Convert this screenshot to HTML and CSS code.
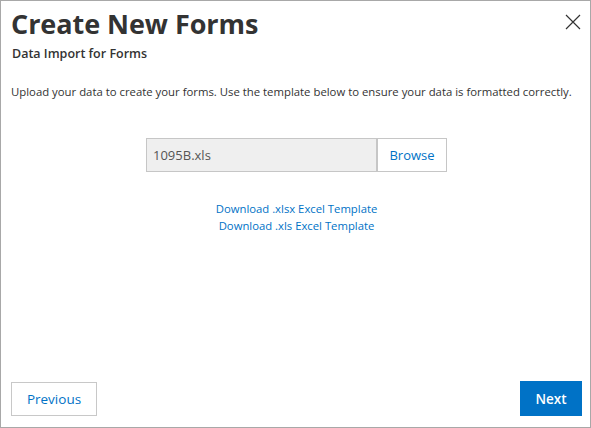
FILE: index.html
```html
<!DOCTYPE html>
<html lang="en">
<head>
<meta charset="utf-8">
<title>Create New Forms</title>
<link rel="stylesheet" href="styles.css">
</head>
<body>
<div class="dialog">
  <header class="dialog-header">
    <div class="titles">
      <h1 class="title">Create New Forms</h1>
      <h2 class="subtitle">Data Import for Forms</h2>
    </div>
    <button class="close" type="button" aria-label="Close">
      <svg width="16" height="16" viewBox="0 0 16 16"><path d="M1 1 L15 15 M15 1 L1 15" stroke="#333" stroke-width="1.2" fill="none"/></svg>
    </button>
  </header>

  <p class="intro">Upload your data to create your forms. Use the template below to ensure your data is formatted correctly.</p>

  <div class="upload">
    <div class="file-name">1095B.xls</div>
    <button class="browse" type="button">Browse</button>
  </div>

  <div class="templates">
    <a href="#">Download .xlsx Excel Template</a>
    <a href="#">Download .xls Excel Template</a>
  </div>

  <footer class="dialog-footer">
    <button class="btn btn-secondary" type="button">Previous</button>
    <button class="btn btn-primary" type="button">Next</button>
  </footer>
</div>
</body>
</html>
```
FILE: styles.css
```css
html, body {
  margin: 0;
  padding: 0;
  background: #fff;
}

body {
  font-family: "Open Sans", "Noto Sans", sans-serif;
  color: #333;
}

.dialog {
  box-sizing: border-box;
  width: 591px;
  height: 428px;
  border: 1px solid #a8a8a8;
  display: flex;
  flex-direction: column;
  padding: 0 8px 11px 10px;
}

.dialog-header {
  display: flex;
  justify-content: space-between;
  align-items: flex-start;
}

.title {
  margin: 4px 0 0 0;
  font-size: 27px;
  font-weight: 700;
  line-height: 38px;
  letter-spacing: -0.05px;
  color: #333;
}

.subtitle {
  margin: 2px 0 0 1px;
  font-size: 12.5px;
  font-weight: 600;
  line-height: 18px;
  color: #333;
}

.close {
  margin: 13px 1px 0 0;
  padding: 0;
  border: 0;
  background: none;
  width: 16px;
  height: 16px;
  line-height: 0;
}

.intro {
  margin: 21px 0 0 0;
  font-size: 11.35px;
  line-height: 16px;
  color: #333;
}

.upload {
  display: flex;
  justify-content: center;
  margin-top: 38px;
  height: 34px;
}

.file-name {
  box-sizing: border-box;
  width: 230px;
  height: 34px;
  background: #efefef;
  border: 1px solid #c6c6c6;
  border-right: 0;
  padding-left: 6px;
  font-size: 13px;
  line-height: 32px;
  color: #555;
}

.browse {
  box-sizing: border-box;
  width: 71px;
  height: 34px;
  background: #fff;
  border: 1px solid #c6c6c6;
  border-left-width: 2px;
  font-family: inherit;
  font-size: 13px;
  color: #0072c6;
  padding: 0;
}

.templates {
  display: flex;
  flex-direction: column;
  align-items: center;
  margin-top: 28px;
}

.templates a {
  font-size: 11.3px;
  line-height: 17px;
  color: #0072c6;
  text-decoration: none;
}

.dialog-footer {
  margin-top: auto;
  display: flex;
  justify-content: space-between;
  align-items: flex-end;
}

.btn {
  box-sizing: border-box;
  height: 34px;
  font-family: inherit;
  font-size: 13.5px;
  padding: 0;
}

.btn-secondary {
  width: 86px;
  background: #fff;
  border: 1px solid #c8c8c8;
  color: #0072c6;
}

.btn-primary {
  width: 62px;
  height: 35px;
  background: #0072c6;
  border: 0;
  color: #fff;
  font-weight: 600;
}
```
